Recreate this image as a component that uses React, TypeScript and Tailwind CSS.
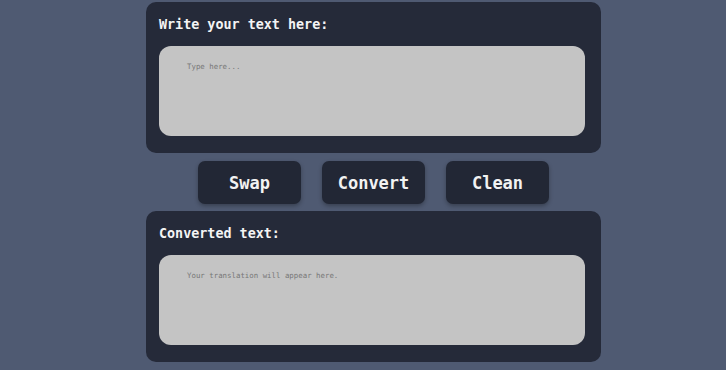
import { useState } from 'react'

const mono = "font-['DejaVu_Sans_Mono',monospace]"

function Panel({ label, placeholder, value, onChange, readOnly }: {
  label: string
  placeholder: string
  value: string
  onChange?: (v: string) => void
  readOnly?: boolean
}) {
  return (
    <section className="w-[455px] rounded-[10px] bg-[#252a39] px-[13px] pt-[13px] pb-[17px]">
      <h2 className={`${mono} mb-[11px] h-[20px] text-[13.4px] leading-[20px] font-bold text-[#f4f4f4]`}>{label}</h2>
      <textarea
        value={value}
        readOnly={readOnly}
        onChange={(e) => onChange?.(e.target.value)}
        placeholder={placeholder}
        className={`${mono} block h-[90px] w-[426px] resize-none rounded-[12px] bg-[#c4c4c4] px-[28px] pt-[15px] text-[7.4px] text-[#444] outline-none placeholder:text-[#777]`}
      />
    </section>
  )
}

export default function App() {
  const [input, setInput] = useState('')
  const [output, setOutput] = useState('')

  const btn = `${mono} h-[43px] w-[103px] rounded-[7px] bg-[#222735] pt-[2px] text-[17px] font-bold text-[#f2f2f2] shadow-[0_2px_4px_rgba(0,0,0,0.3)]`

  return (
    <div className="flex min-h-[370px] flex-col items-center bg-[#4f5a72] pt-[2px] pl-[21px]">
      <Panel label="Write your text here:" placeholder="Type here..." value={input} onChange={setInput} />
      <div className="mt-[8px] mb-[7px] flex gap-[21px]">
        <button className={btn} onClick={() => { setInput(output); setOutput(input) }}>Swap</button>
        <button className={btn} onClick={() => setOutput(input)}>Convert</button>
        <button className={btn} onClick={() => { setInput(''); setOutput('') }}>Clean</button>
      </div>
      <Panel label="Converted text:" placeholder="Your translation will appear here." value={output} readOnly />
    </div>
  )
}
